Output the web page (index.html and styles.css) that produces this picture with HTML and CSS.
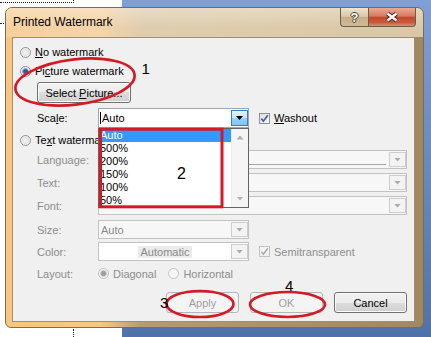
FILE: index.html
```html
<!DOCTYPE html>
<html lang="en">
<head>
    <meta charset="UTF-8">
    <meta name="viewport" content="width=device-width, initial-scale=1.0">
    <title>Printed Watermark</title>
    <link rel="stylesheet" href="styles.css">
</head>
<body>
    <div class="sheet-edge top"></div>
    <div class="sheet-edge side"></div>
    <div class="sheet-edge bottom"></div>

    <div class="dialog">
        <div class="titlebar">
            <span class="title">Printed Watermark</span>
            <div class="caption">
                <span class="cap-btn help">?</span>
                <span class="cap-btn close">
                    <svg width="14" height="10" viewBox="0 0 14 10">
                        <path d="M2.5 1.5L11.5 8.5M11.5 1.5L2.5 8.5" stroke="#4b2419" stroke-width="4.4"/>
                        <path d="M2.5 1.5L11.5 8.5M11.5 1.5L2.5 8.5" stroke="#fff" stroke-width="2.4"/>
                    </svg>
                </span>
            </div>
        </div>

        <div class="client">
            <div class="opt row-no"><span class="radio"></span><span><u>N</u>o watermark</span></div>
            <div class="opt row-pic"><span class="radio on"></span><span>Pi<u>c</u>ture watermark</span></div>
            <button class="btn select">Select <u>P</u>icture...</button>

            <div class="field row-scale">
                <span class="lbl">Sca<u>l</u>e:</span>
                <div class="combo">
                    <span class="val"><i class="caret"></i>Auto</span>
                    <span class="drop hot"></span>
                    <div class="list">
                        <ul class="items">
                            <li class="sel">Auto</li>
                            <li>500%</li>
                            <li>200%</li>
                            <li>150%</li>
                            <li>100%</li>
                            <li>50%</li>
                        </ul>
                        <div class="scroll">
                            <span><i class="arrow-up"></i></span>
                            <span><i class="arrow-down"></i></span>
                        </div>
                    </div>
                </div>
                <span class="check on">
                    <svg width="9" height="9" viewBox="0 0 9 9"><path d="M1.3 4.6L3.4 7.2L7.8 1.3" fill="none" stroke="#3f5ea8" stroke-width="1.7"/></svg>
                </span>
                <span class="check-lbl"><u>W</u>ashout</span>
            </div>

            <div class="opt row-text"><span class="radio"></span><span>Te<u>x</u>t watermark</span></div>

            <div class="field row-lang off">
                <span class="lbl">Language:</span>
                <div class="combo wide off"><span class="val lines"></span><span class="drop"></span></div>
            </div>
            <div class="field row-txt off">
                <span class="lbl">Text:</span>
                <div class="combo wide off"><span class="val"></span><span class="drop"></span></div>
            </div>
            <div class="field row-font off">
                <span class="lbl">Font:</span>
                <div class="combo wide off"><span class="val"></span><span class="drop"></span></div>
            </div>
            <div class="field row-size off">
                <span class="lbl">Size:</span>
                <div class="combo off"><span class="val">Auto</span><span class="drop"></span></div>
            </div>
            <div class="field row-color off">
                <span class="lbl">Color:</span>
                <div class="combo off white"><span class="val center"><span class="hl">Automatic</span></span><span class="drop"></span></div>
                <span class="check on off">
                    <svg width="9" height="9" viewBox="0 0 9 9"><path d="M1.3 4.6L3.4 7.2L7.8 1.3" fill="none" stroke="#a9a9a9" stroke-width="1.5"/></svg>
                </span>
                <span class="check-lbl">Semitransparent</span>
            </div>
            <div class="field row-layout off">
                <span class="lbl">Layout:</span>
                <span class="radio on off"></span><span class="radio-txt">Diagonal</span>
                <span class="radio off second"></span><span class="radio-txt">Horizontal</span>
            </div>

            <div class="actions">
                <button class="btn" disabled>Apply</button>
                <button class="btn" disabled>OK</button>
                <button class="btn">Cancel</button>
            </div>
        </div>
    </div>

    <svg class="marks" width="431" height="337" viewBox="0 0 431 337">
        <ellipse cx="75" cy="82" rx="60" ry="22.5" transform="rotate(-7 75 82)"/>
        <rect x="100.5" y="129.2" width="121.5" height="77.6"/>
        <ellipse cx="200" cy="304" rx="33.5" ry="13"/>
        <ellipse cx="287.5" cy="304.5" rx="37.5" ry="12.5"/>
        <text x="141.5" y="74">1</text>
        <text x="177" y="178.5" class="big">2</text>
        <text x="160" y="307.5">3</text>
        <text x="285" y="290.5">4</text>
    </svg>
</body>
</html>
```

FILE: styles.css
```css
* { box-sizing: border-box; }
body { margin: 0; width: 431px; height: 337px; overflow: hidden; font-family: "Liberation Sans", Arial, sans-serif; font-size: 11px; color: #000; background: linear-gradient(to right, #fff 122px, transparent 122px), linear-gradient(#7f9fd5, #5072ab); }

/* document page behind the dialog */
.sheet-edge { position: absolute; }
.sheet-edge.top { left: 0; top: 0; width: 74px; height: 3px; border-right: 1px dotted #222; border-bottom: 1px dotted #222; }
.sheet-edge.side { left: 0; top: 23px; width: 4px; border-top: 1px dotted #222; }
.sheet-edge.bottom { left: 73px; top: 329px; height: 8px; border-left: 1px dotted #222; }

/* window frame */
.dialog { width: 419px; height: 321px; margin: 7px 0 0 5px; border: 1px solid #7c6c55; border-radius: 7px 7px 6px 6px; overflow: hidden; display: flex; flex-direction: column; background: linear-gradient(to right, #f9c57f 0, #f8c886 95px, #b59b72 135px, #a2885f 100%); }
.titlebar { height: 29px; flex: none; display: flex; justify-content: space-between; align-items: flex-start; padding: 0 7px; background: linear-gradient(rgba(255,255,255,0.3), rgba(255,255,255,0) 70%), linear-gradient(to right, #f7cf9c 0, #f5d4a8 95px, #dfcdae 135px, #d9c7a7 100%); }
.title { font-size: 12px; line-height: 16px; padding-top: 6px; }
.caption { display: flex; }
.cap-btn { height: 19px; display: flex; align-items: center; justify-content: center; border: 1px solid #6e5d45; border-top: none; }
.help { width: 28px; border-right: none; border-radius: 0 0 0 4px; background: linear-gradient(#efe4d0, #d9c6a5 48%, #c6af88 52%, #d0bc98); color: #fff; font-weight: bold; font-size: 13px; text-shadow: 1px 0 #4d4232, -1px 0 #4d4232, 0 1px #4d4232, 0 -1px #4d4232; }
.close { width: 48px; border-radius: 0 0 4px 0; background: linear-gradient(#eaa994, #d87a60 45%, #c2482d 52%, #c95a3c 80%, #dc8e74); }

/* client area */
.client { flex: 1; margin: 0 8px 5px 6px; padding: 8px 7px 0 7px; background: #f0f0f0; border: 1px solid #9e8e73; display: flex; flex-direction: column; }
.opt { display: flex; align-items: center; gap: 4px; height: 13px; line-height: 13px; }
.row-pic { margin-top: 6px; }
.row-text { margin-top: 6px; }
.field { display: flex; align-items: center; padding-left: 17px; }
.field .lbl { width: 61px; }
.field.off .lbl, .field.off .check-lbl, .field.off .radio-txt { color: #8d8d8d; }
.row-scale { margin-top: 5px; }
.row-lang { margin-top: 3px; }
.row-txt, .row-font { margin-top: 4px; }
.row-size { margin-top: 5px; }
.row-color { margin-top: 3px; }
.row-layout { margin-top: 6px; height: 13px; }

/* radios and checks */
.radio { width: 11px; height: 11px; flex: none; border-radius: 50%; border: 1px solid #8e8f8f; background: radial-gradient(circle, #f6f6f6 0, #e2e2e2 3px, #fdfdfd 5px); }
.radio.on { background: radial-gradient(circle, #1f4f96 0, #2d66b6 2px, #8db3e3 3px, #e4e4e4 3.6px, #fbfbfb 5px); }
.radio.off { border-color: #c3c3c3; background: #f7f7f7; }
.radio.on.off { background: radial-gradient(circle, #9a9a9a 0, #a6a6a6 2.4px, #dadada 3.2px, #f7f7f7 4px); }
.radio-txt { margin-left: 4px; }
.radio.second { margin-left: 12px; }
.check { width: 11px; height: 11px; flex: none; margin-left: 10px; border: 1px solid #8e8f8f; background: linear-gradient(135deg, #dedede, #fbfbfb); display: flex; align-items: center; justify-content: center; }
.check.off { border-color: #c2c2c2; background: #f5f5f5; }
.check-lbl { margin-left: 4px; }

/* combos */
.combo { width: 151px; height: 19px; display: flex; padding: 1px 0; position: relative; border: 1px solid #a0a6ae; background: #fff; }
.row-scale .combo { height: 20px; }
.combo.wide { width: 311px; }
.combo.off { border-color: #c2c2c2; background: #f7f7f7; color: #8a8a8a; }
.combo.off.white { background: #fff; }
.val { flex: 1; display: flex; align-items: center; padding-left: 2px; }
.val.center { justify-content: center; padding-left: 0; }
.val.lines { margin: 0 3px 0 1px; background: linear-gradient(transparent 12px, #a8a8a8 12px, #a8a8a8 13px, transparent 13px, transparent 15px, #a8a8a8 15px, #a8a8a8 16px, transparent 16px); }
.hl { background: #ebebeb; padding: 0 3px; line-height: 12px; }
.caret { width: 1px; height: 12px; background: #000; margin: 0 1px 0 -1px; }
.drop { width: 17px; flex: none; border: 1px solid #cdcdcd; background: #f3f3f3; display: flex; align-items: center; justify-content: center; }
.drop::after { content: ""; width: 7px; height: 4px; background: #aaa; clip-path: polygon(0 0, 100% 0, 50% 100%); }
.drop.hot { border-color: #3c7fb1; background: linear-gradient(#e3f2fd, #c4e5fb 50%, #9ccff3 52%, #86c1ec); }
.drop.hot::after { background: #000; }

/* open dropdown */
.list { position: absolute; left: -1px; top: calc(100% + 1px); width: 151px; height: 80px; z-index: 3; display: flex; border: 1px solid #646464; background: #fff; color: #000; }
.items { flex: 1; list-style: none; margin: 0; padding: 0; }
.items li { height: 13px; line-height: 13px; padding-left: 1px; }
.items li.sel { background: #3399ff; color: #fff; }
.scroll { width: 17px; display: flex; flex-direction: column; justify-content: space-between; background: #f5f5f5; border-left: 1px solid #ebebeb; }
.scroll span { height: 17px; display: flex; align-items: center; justify-content: center; }
.arrow-up, .arrow-down { width: 7px; height: 4px; background: #b0b0b0; }
.arrow-up { clip-path: polygon(50% 0, 100% 100%, 0 100%); }
.arrow-down { clip-path: polygon(0 0, 100% 0, 50% 100%); }

/* buttons */
.btn { height: 21px; padding: 0; font-family: inherit; font-size: 11px; color: #000; border: 1px solid #707070; border-radius: 3px; background: linear-gradient(#f2f2f2, #ebebeb 50%, #dddddd 50%, #cfcfcf); box-shadow: inset 0 0 0 1px #fbfbfb; }
.btn:disabled { color: #a0a0a0; border-color: #b3b6b8; background: #f4f4f4; box-shadow: none; }
.select { width: 94px; margin: 4px 0 0 17px; }
.actions { display: flex; justify-content: flex-end; gap: 11px; margin-top: 12px; }
.actions .btn { width: 73px; }

/* red annotations drawn over the screenshot */
.marks { position: absolute; left: 0; top: 0; z-index: 5; pointer-events: none; }
.marks ellipse, .marks rect { fill: none; stroke: #d51a26; stroke-width: 2.7; }
.marks rect { stroke-width: 3; }
.marks text { font-family: "Liberation Sans", Arial, sans-serif; font-size: 15px; fill: #000; }
.marks text.big { font-size: 16px; }
```
